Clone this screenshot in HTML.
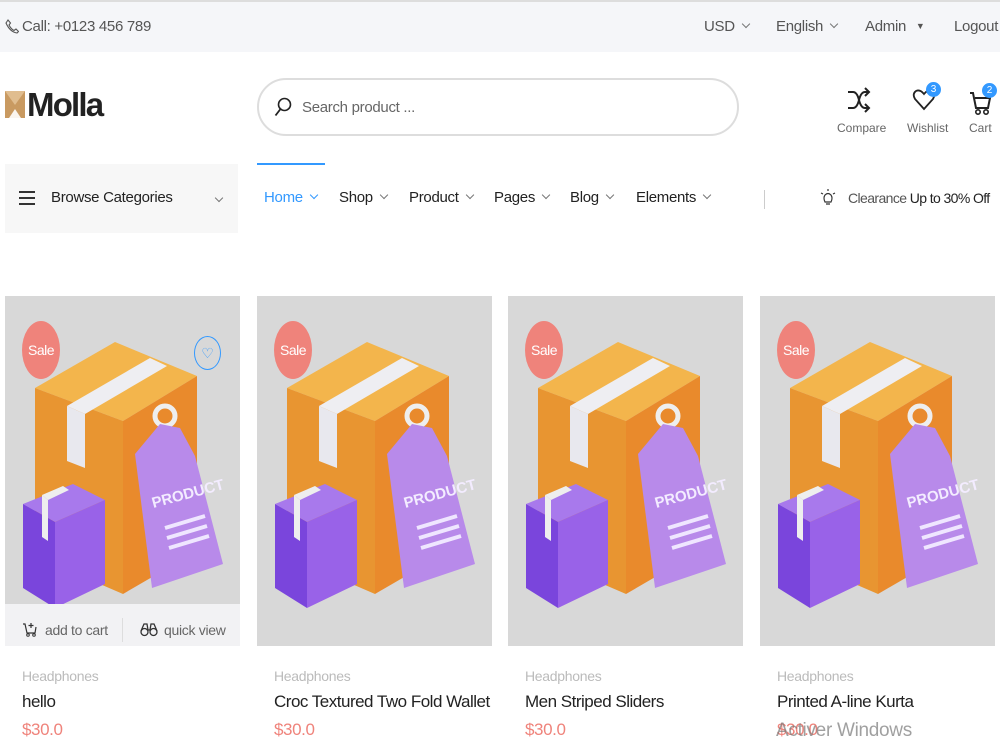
<!DOCTYPE html>
<html><head><meta charset="utf-8"><style>
*{margin:0;padding:0;box-sizing:border-box}
body{width:1000px;height:750px;overflow:hidden;background:#fff;font-family:"Liberation Sans",sans-serif;color:#333;position:relative}
.abs{position:absolute;white-space:nowrap}
.top{top:0;left:0;width:1000px;height:52px;background:#f5f6f9;border-top:2px solid #ddd}
.t{font-size:15px;color:#555;position:absolute;top:18px;letter-spacing:-0.3px;white-space:nowrap}
.chev{display:inline-block;width:6px;height:6px;border-right:1.2px solid #777;border-bottom:1.2px solid #777;transform:rotate(45deg);margin-left:8px;position:relative;top:-4px}
.nav{position:absolute;top:189px;font-size:15px;color:#222;letter-spacing:-0.3px;white-space:nowrap}
.card{position:absolute;top:296px;width:235px;height:460px}
.img{position:absolute;left:0;top:0;width:235px;height:350px;background:#d8d8d8}
.sale{position:absolute;left:17px;top:25px;width:38px;height:58px;border-radius:50%;background:#ef837b;color:#fff;font-size:14px;text-align:center;line-height:58px;letter-spacing:-0.5px}
.cat{position:absolute;left:17px;top:372px;font-size:14px;color:#bbb;letter-spacing:-0.3px;white-space:nowrap}
.name{position:absolute;left:17px;top:396px;font-size:17px;color:#222;letter-spacing:-0.5px;white-space:nowrap}
.price{position:absolute;left:17px;top:424px;font-size:17px;color:#ef837b;letter-spacing:-0.4px}
</style></head><body>
<div class="abs top"></div>
<svg class="abs" style="left:5px;top:19px" width="14" height="15" viewBox="0 0 14 15"><path d="M3 1 L5.5 4 L4 6 Q6 10 9 11.5 L11 10 L13.5 12.5 L12 14 Q5 13 1 4 Z" fill="none" stroke="#555" stroke-width="1.1"/></svg>
<div class="t" style="left:22px">Call: +0123 456 789</div>
<div class="t" style="left:704px">USD<span class="chev"></span></div>
<div class="t" style="left:776px">English<span class="chev"></span></div>
<div class="t" style="left:865px">Admin <span style="font-size:9px;margin-left:6px;position:relative;top:-2px">▼</span></div>
<div class="t" style="left:954px">Logout</div>

<svg class="abs" style="left:5px;top:91px" width="20" height="27" viewBox="0 0 20 27"><rect width="20" height="27" fill="#c99a61"/><path d="M0 0 L10 14 L20 0" fill="#e0bd8f"/><path d="M4 27 L10 18 L16 27Z" fill="#fff" opacity=".9"/></svg>
<div class="abs" style="left:27px;top:86px;font-size:33px;font-weight:bold;color:#222;letter-spacing:-1.8px">Molla</div>

<div class="abs" style="left:257px;top:78px;width:482px;height:58px;border:2px solid #ddd;border-radius:29px"></div>
<svg class="abs" style="left:274px;top:97px" width="18" height="20" viewBox="0 0 18 20"><circle cx="10.5" cy="7.5" r="6" fill="none" stroke="#222" stroke-width="1.6"/><path d="M6.5 12 L1.5 18.5" stroke="#222" stroke-width="1.8"/></svg>
<div class="abs" style="left:302px;top:99px;font-size:15px;color:#666;letter-spacing:-0.3px">Search product ...</div>

<svg class="abs" style="left:847px;top:86px" width="24" height="28" viewBox="0 0 24 28"><path d="M1 6 H6 Q10 6 12 14 Q14 22 18 22 H22 M1 22 H6 Q10 22 12 14 Q14 6 18 6 H22 M18 2 L22 6 L18 10 M18 18 L22 22 L18 26" fill="none" stroke="#222" stroke-width="2"/></svg>
<div class="abs" style="left:837px;top:121px;font-size:12px;color:#666">Compare</div>
<svg class="abs" style="left:912px;top:88px" width="24" height="24" viewBox="0 0 24 24"><path d="M12 21 L3 11 Q0 6 4 3 Q8 1 12 6 Q16 1 20 3 Q24 6 21 11Z" fill="none" stroke="#222" stroke-width="1.8"/></svg>
<div class="abs" style="left:926px;top:82px;width:15px;height:15px;border-radius:50%;background:#3399ff;color:#fff;font-size:10px;text-align:center;line-height:15px">3</div>
<div class="abs" style="left:907px;top:121px;font-size:12px;color:#666">Wishlist</div>
<svg class="abs" style="left:969px;top:90px" width="22" height="26" viewBox="0 0 22 26"><path d="M1 3 H4 L7 18 H19 L21 8 H6" fill="none" stroke="#222" stroke-width="2"/><circle cx="9" cy="22" r="2.2" fill="none" stroke="#222" stroke-width="1.6"/><circle cx="17" cy="22" r="2.2" fill="none" stroke="#222" stroke-width="1.6"/></svg>
<div class="abs" style="left:982px;top:83px;width:15px;height:15px;border-radius:50%;background:#3399ff;color:#fff;font-size:10px;text-align:center;line-height:15px">2</div>
<div class="abs" style="left:969px;top:121px;font-size:12px;color:#666">Cart</div>

<div class="abs" style="left:5px;top:164px;width:233px;height:69px;background:#f7f7f7"></div>
<div class="abs" style="left:19px;top:191px;width:16px;height:2px;background:#333;box-shadow:0 6px 0 #333,0 12px 0 #333"></div>
<div class="abs" style="left:51px;top:189px;font-size:15px;color:#222;letter-spacing:-0.3px">Browse Categories</div>
<span class="chev" style="position:absolute;left:216px;top:195px;margin:0"></span>

<div class="abs" style="left:257px;top:163px;width:68px;height:2px;background:#3399ff"></div>
<div class="nav" style="left:264px;color:#3399ff">Home<span class="chev" style="border-color:#3399ff"></span></div>
<div class="nav" style="left:339px">Shop<span class="chev"></span></div>
<div class="nav" style="left:409px">Product<span class="chev"></span></div>
<div class="nav" style="left:494px">Pages<span class="chev"></span></div>
<div class="nav" style="left:570px">Blog<span class="chev"></span></div>
<div class="nav" style="left:636px">Elements<span class="chev"></span></div>
<div class="abs" style="left:764px;top:190px;width:1px;height:19px;background:#ccc"></div>
<svg class="abs" style="left:820px;top:189px" width="16" height="18" viewBox="0 0 16 18"><path d="M5 13 Q3 9 5 6 Q8 3 11 6 Q13 9 11 13Z M6 15 H10 M1 4 L3 5 M15 4 L13 5 M8 0 V2" fill="none" stroke="#333" stroke-width="1.2"/></svg>
<div class="nav" style="left:848px;color:#555;letter-spacing:-0.6px;font-size:14px;top:190px">Clearance <span style="color:#222">Up to 30% Off</span></div>

<!-- cards -->
<div class="card" style="left:5px">
 <div class="img"><svg width="235" height="350" viewBox="0 0 235 350">
 <polygon points="30,92 110,46 192,80 118,125" fill="#f3b54c"/>
 <polygon points="30,92 118,125 118,298 30,260" fill="#e89531"/>
 <polygon points="118,125 192,80 192,255 118,298" fill="#e98a2c"/>
 <polygon points="62,110 145,62 162,70 80,118" fill="#eeeef2"/>
 <polygon points="62,110 80,118 80,172 62,165" fill="#e8e8ee"/>
 <circle cx="160" cy="120" r="10" fill="none" stroke="#eee" stroke-width="5"/>
 <polygon points="130,158 155,128 175,132 190,160 218,268 147,292" fill="#b88aea"/>
 <text x="146" y="206" font-size="15" font-weight="bold" fill="#f3ecff" font-family="Liberation Sans" transform="rotate(-15 170 200)">PRODUCT</text>
 <path d="M160 232 L200 220 M162 242 L202 230 M164 252 L204 240" stroke="#efe6ff" stroke-width="4"/>
 <polygon points="18,208 68,188 100,204 50,226" fill="#a879ec"/>
 <polygon points="18,208 50,226 50,312 18,292" fill="#7a45dc"/>
 <polygon points="50,226 100,204 100,288 50,312" fill="#9962e8"/>
 <polygon points="37,199 58,190 64,194 43,204" fill="#eee"/>
 <polygon points="37,199 43,204 43,245 37,241" fill="#eee"/>
 </svg>
 <div class="sale">Sale</div>
 <div style="position:absolute;left:189px;top:40px;width:27px;height:34px;border:1.3px solid #3399ff;border-radius:50%;color:#3399ff;font-size:14px;text-align:center;line-height:32px">♡</div>
 </div>
 <div style="position:absolute;left:0;top:308px;width:235px;height:42px;background:#f2f2f4"></div>
 <svg style="position:absolute;left:18px;top:326px" width="15" height="15" viewBox="0 0 15 15"><path d="M0 2 H2 L4 11 H12 L13 5 M8 1 V6 M5.5 3.5 H10.5" fill="none" stroke="#333" stroke-width="1.2"/><circle cx="5" cy="13" r="1.3" fill="none" stroke="#333"/><circle cx="11" cy="13" r="1.3" fill="none" stroke="#333"/></svg>
 <div style="position:absolute;left:40px;top:326px;font-size:14px;color:#666;letter-spacing:-0.3px;white-space:nowrap">add to cart</div>
 <div style="position:absolute;left:117px;top:322px;width:1px;height:24px;background:#ddd"></div>
 <svg style="position:absolute;left:135px;top:326px" width="18" height="15" viewBox="0 0 18 15"><circle cx="4.5" cy="10" r="3.5" fill="none" stroke="#333" stroke-width="1.3"/><circle cx="13.5" cy="10" r="3.5" fill="none" stroke="#333" stroke-width="1.3"/><path d="M1 9 L4 2 H7 L8 8 H10 L11 2 H14 L17 9" fill="none" stroke="#333" stroke-width="1.3"/></svg>
 <div style="position:absolute;left:159px;top:326px;font-size:14px;color:#666;letter-spacing:-0.3px;white-space:nowrap">quick view</div>
 <div class="cat">Headphones</div><div class="name">hello</div><div class="price">$30.0</div>
</div>
<div class="card" style="left:257px"><div class="img"><svg width="235" height="350" viewBox="0 0 235 350">
 <polygon points="30,92 110,46 192,80 118,125" fill="#f3b54c"/><polygon points="30,92 118,125 118,298 30,260" fill="#e89531"/><polygon points="118,125 192,80 192,255 118,298" fill="#e98a2c"/><polygon points="62,110 145,62 162,70 80,118" fill="#eeeef2"/><polygon points="62,110 80,118 80,172 62,165" fill="#e8e8ee"/><circle cx="160" cy="120" r="10" fill="none" stroke="#eee" stroke-width="5"/><polygon points="130,158 155,128 175,132 190,160 218,268 147,292" fill="#b88aea"/><text x="146" y="206" font-size="15" font-weight="bold" fill="#f3ecff" font-family="Liberation Sans" transform="rotate(-15 170 200)">PRODUCT</text><path d="M160 232 L200 220 M162 242 L202 230 M164 252 L204 240" stroke="#efe6ff" stroke-width="4"/><polygon points="18,208 68,188 100,204 50,226" fill="#a879ec"/><polygon points="18,208 50,226 50,312 18,292" fill="#7a45dc"/><polygon points="50,226 100,204 100,288 50,312" fill="#9962e8"/><polygon points="37,199 58,190 64,194 43,204" fill="#eee"/><polygon points="37,199 43,204 43,245 37,241" fill="#eee"/></svg><div class="sale">Sale</div></div>
 <div class="cat">Headphones</div><div class="name">Croc Textured Two Fold Wallet</div><div class="price">$30.0</div></div>
<div class="card" style="left:508px"><div class="img"><svg width="235" height="350" viewBox="0 0 235 350">
 <polygon points="30,92 110,46 192,80 118,125" fill="#f3b54c"/><polygon points="30,92 118,125 118,298 30,260" fill="#e89531"/><polygon points="118,125 192,80 192,255 118,298" fill="#e98a2c"/><polygon points="62,110 145,62 162,70 80,118" fill="#eeeef2"/><polygon points="62,110 80,118 80,172 62,165" fill="#e8e8ee"/><circle cx="160" cy="120" r="10" fill="none" stroke="#eee" stroke-width="5"/><polygon points="130,158 155,128 175,132 190,160 218,268 147,292" fill="#b88aea"/><text x="146" y="206" font-size="15" font-weight="bold" fill="#f3ecff" font-family="Liberation Sans" transform="rotate(-15 170 200)">PRODUCT</text><path d="M160 232 L200 220 M162 242 L202 230 M164 252 L204 240" stroke="#efe6ff" stroke-width="4"/><polygon points="18,208 68,188 100,204 50,226" fill="#a879ec"/><polygon points="18,208 50,226 50,312 18,292" fill="#7a45dc"/><polygon points="50,226 100,204 100,288 50,312" fill="#9962e8"/><polygon points="37,199 58,190 64,194 43,204" fill="#eee"/><polygon points="37,199 43,204 43,245 37,241" fill="#eee"/></svg><div class="sale">Sale</div></div>
 <div class="cat">Headphones</div><div class="name">Men Striped Sliders</div><div class="price">$30.0</div></div>
<div class="card" style="left:760px"><div class="img"><svg width="235" height="350" viewBox="0 0 235 350">
 <polygon points="30,92 110,46 192,80 118,125" fill="#f3b54c"/><polygon points="30,92 118,125 118,298 30,260" fill="#e89531"/><polygon points="118,125 192,80 192,255 118,298" fill="#e98a2c"/><polygon points="62,110 145,62 162,70 80,118" fill="#eeeef2"/><polygon points="62,110 80,118 80,172 62,165" fill="#e8e8ee"/><circle cx="160" cy="120" r="10" fill="none" stroke="#eee" stroke-width="5"/><polygon points="130,158 155,128 175,132 190,160 218,268 147,292" fill="#b88aea"/><text x="146" y="206" font-size="15" font-weight="bold" fill="#f3ecff" font-family="Liberation Sans" transform="rotate(-15 170 200)">PRODUCT</text><path d="M160 232 L200 220 M162 242 L202 230 M164 252 L204 240" stroke="#efe6ff" stroke-width="4"/><polygon points="18,208 68,188 100,204 50,226" fill="#a879ec"/><polygon points="18,208 50,226 50,312 18,292" fill="#7a45dc"/><polygon points="50,226 100,204 100,288 50,312" fill="#9962e8"/><polygon points="37,199 58,190 64,194 43,204" fill="#eee"/><polygon points="37,199 43,204 43,245 37,241" fill="#eee"/></svg><div class="sale">Sale</div></div>
 <div class="cat">Headphones</div><div class="name">Printed A-line Kurta</div><div class="price">$30.0</div></div>
<div class="abs" style="left:776px;top:720px;font-size:19px;color:rgba(120,120,120,.7);letter-spacing:-0.3px">Activer Windows</div>
</body></html>
